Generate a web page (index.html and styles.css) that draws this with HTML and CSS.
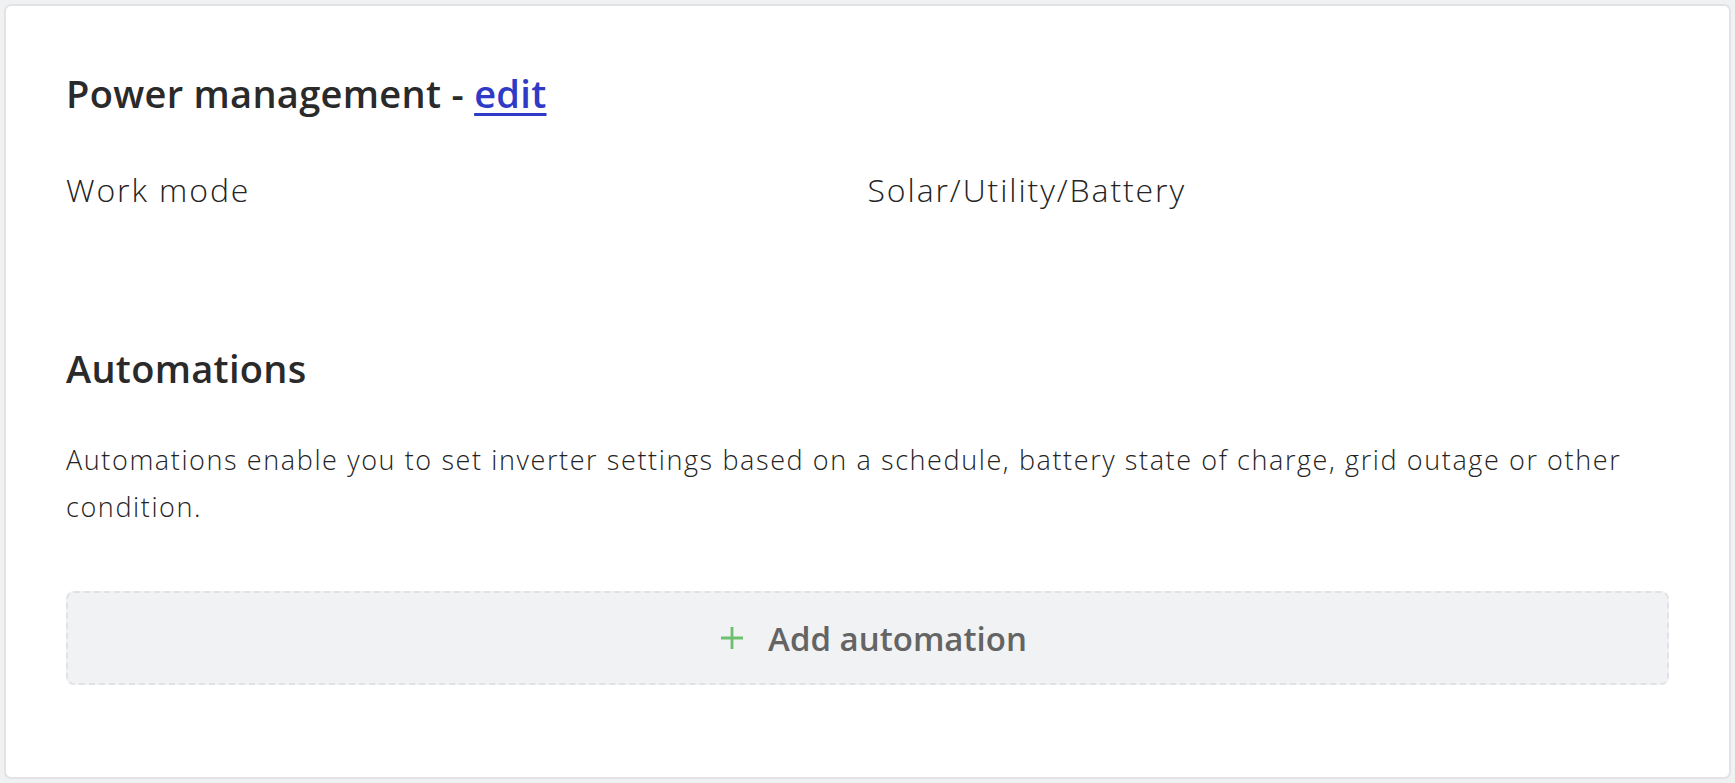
FILE: index.html
```html
<!DOCTYPE html>
<html lang="en">
<head>
<meta charset="utf-8">
<title>Power management</title>
<link rel="stylesheet" href="styles.css">
</head>
<body>
<main class="card">
  <h2 class="section-title">Power management - <a href="#" class="edit-link">edit</a></h2>
  <div class="setting-row">
    <div class="setting-label">Work mode</div>
    <div class="setting-value">Solar/Utility/Battery</div>
  </div>

  <h2 class="section-title automations-title">Automations</h2>
  <p class="description">Automations enable you to set inverter settings based on a schedule, battery state of charge, grid outage or other condition.</p>

  <button class="add-button" type="button">
    <svg class="plus-icon" width="24" height="24" viewBox="0 0 24 24" aria-hidden="true">
      <path d="M12 1V23M1 12H23" stroke="#6cbf6e" stroke-width="2.8" fill="none"/>
    </svg>
    <span>Add automation</span>
  </button>
</main>
</body>
</html>
```

FILE: styles.css
```css
html, body {
  margin: 0;
  padding: 0;
}

body {
  background: #f0f1f3;
  padding: 4px;
  font-family: "Open Sans", "Noto Sans", sans-serif;
  color: #242424;
}

.card {
  background: #ffffff;
  border: 2px solid #e2e3e5;
  border-radius: 7px;
  padding: 64px 60px 90px 60px;
  min-height: 775px;
  box-sizing: border-box;
}

.section-title {
  margin: 0;
  font-size: 38px;
  line-height: 46px;
  font-weight: 600;
  letter-spacing: 0.3px;
  color: #2a2a2a;
}

.edit-link {
  color: #2f3bc6;
  text-decoration: underline;
  text-underline-offset: 5px;
  text-decoration-thickness: 3px;
}

.setting-row {
  display: grid;
  grid-template-columns: 1fr 1fr;
  margin-top: 54px;
  font-size: 32px;
  line-height: 40px;
  font-weight: 300;
  letter-spacing: 1.9px;
}

.automations-title {
  margin-top: 135px;
}

.description {
  margin: 45px 0 0 0;
  font-size: 27px;
  line-height: 47px;
  font-weight: 300;
  letter-spacing: 1.6px;
}

.add-button {
  margin-top: 61px;
  width: 100%;
  height: 94px;
  display: flex;
  align-items: center;
  justify-content: center;
  gap: 24px;
  padding: 0 0 0 12px;
  background: #f1f2f4;
  border: 2px dashed #e1e2e5;
  border-radius: 8px;
  font-family: inherit;
  font-size: 33px;
  font-weight: 600;
  letter-spacing: 0;
  color: #646464;
  cursor: pointer;
}

.plus-icon {
  display: block;
}
```
